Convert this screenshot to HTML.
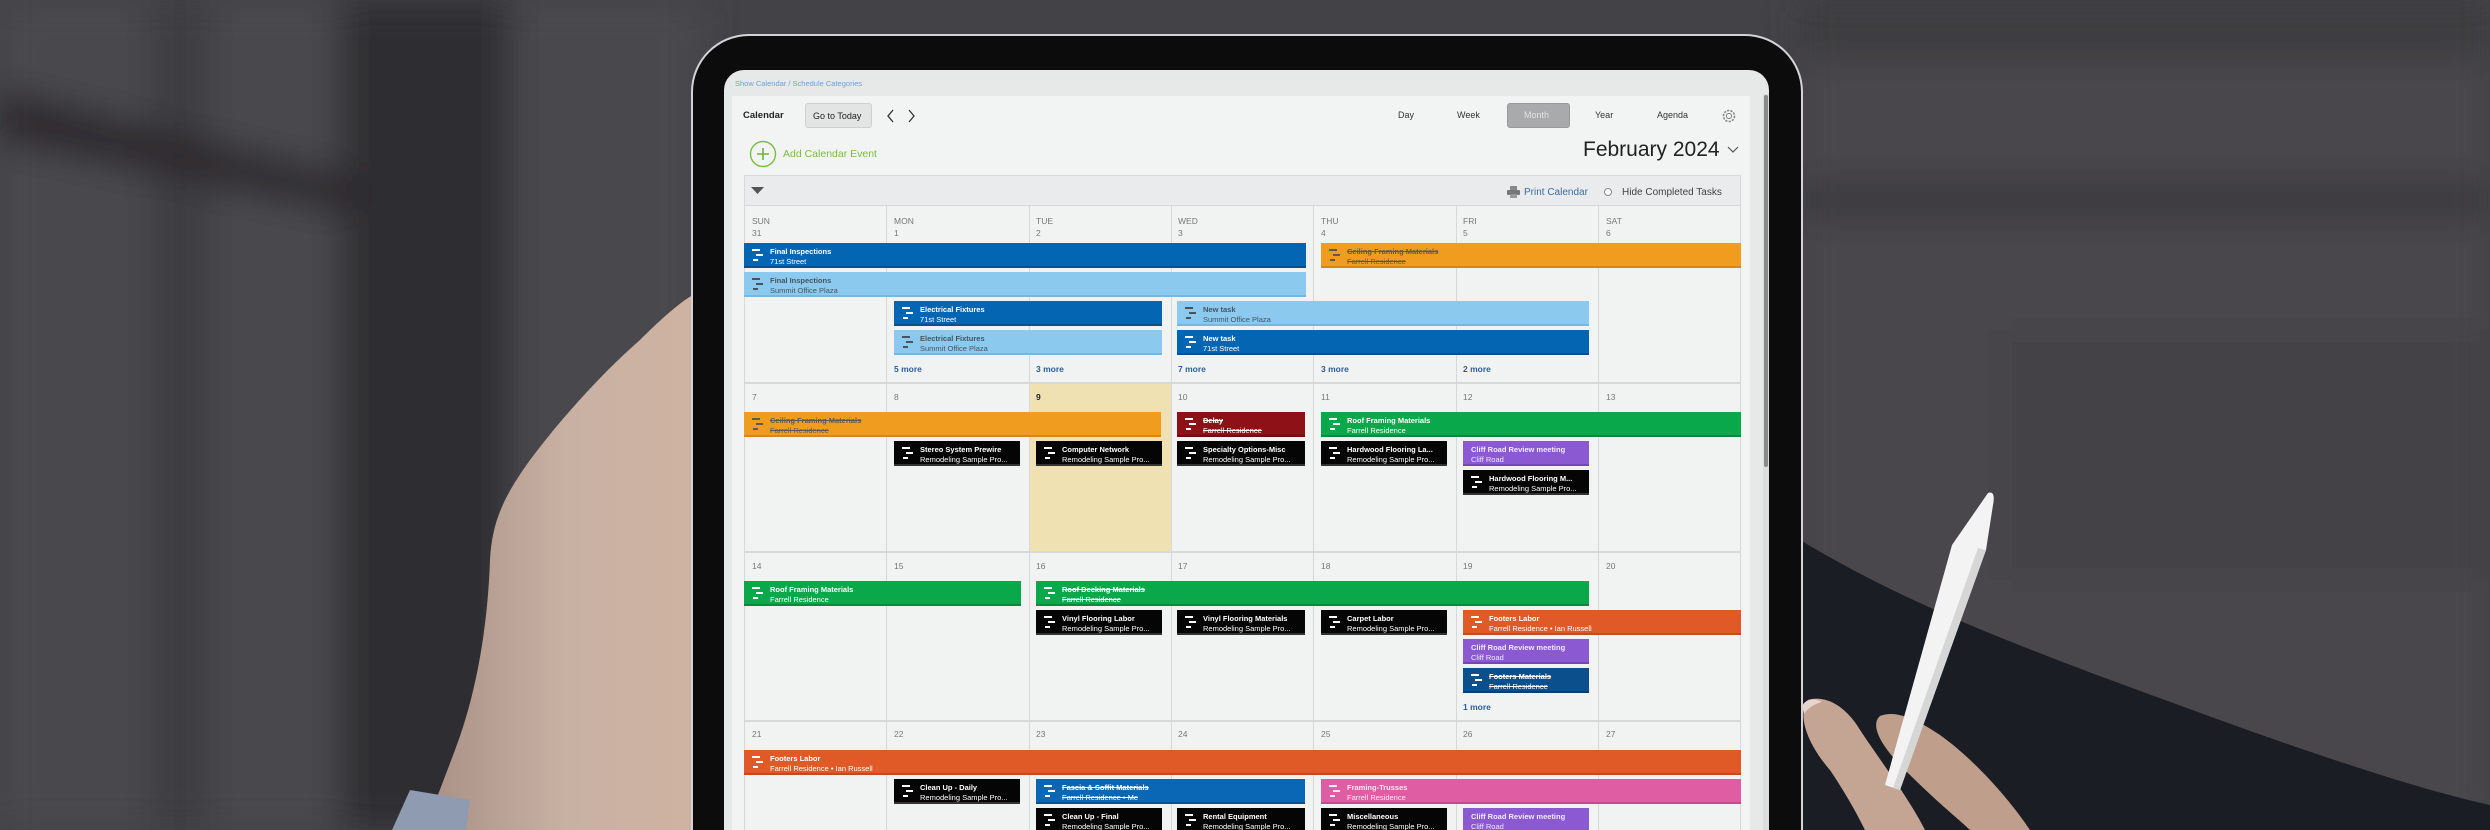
<!DOCTYPE html>
<html><head><meta charset="utf-8">
<style>
*{margin:0;padding:0;box-sizing:border-box}
html,body{width:2490px;height:830px;overflow:hidden;background:#414044;font-family:"Liberation Sans",sans-serif}
#root{position:relative;width:2490px;height:830px;overflow:hidden}
.abs{position:absolute}
.t{position:absolute;white-space:nowrap}
.e{position:absolute;height:25px;color:#fff;font-family:"Liberation Sans",sans-serif;overflow:hidden;white-space:nowrap}
.e b{position:absolute;left:26px;top:4px;font-size:7.5px;font-weight:bold}
.e span{position:absolute;left:26px;top:14px;font-size:7.5px}
.e i{position:absolute;left:8px;top:6px;width:11px;height:12px;
background:linear-gradient(currentColor,currentColor) 0 0/8px 2px no-repeat,linear-gradient(currentColor,currentColor) 4px 5px/7px 2px no-repeat,linear-gradient(currentColor,currentColor) 1px 10px/5px 2px no-repeat}
.s b,.s span{text-decoration:line-through}
.db{background:#0466b3;border-bottom:2px solid #0c4f8c}
.lb{background:#8cc9ef;color:#46545f;border-bottom:2px solid #79b6dd}
.or{background:#f09d1f;color:#5d5a55;border-bottom:2px solid #d8861a}
.gr{background:#08a84b;border-bottom:2px solid #078a3d}
.rd{background:#8e1117;border-bottom:2px solid #6e0c10}
.bk{background:#050505;border-bottom:2px solid #333}
.pu{background:#8b5ad2;color:#f0eaff;border-bottom:2px solid #7447b6}
.ore{background:#e05a28;border-bottom:2px solid #c24a1e}
.nv{background:#0b4f8c;border-bottom:2px solid #083e70}
.bl{background:#0a67b5;border-bottom:2px solid #0b4f8c}
.pk{background:#df5ea3;color:#fde8f3;border-bottom:2px solid #c44b8b}
.last{height:22px;border-bottom:0}
.dn{position:absolute;font-size:8.5px;color:#777}
.more{position:absolute;font-size:8.5px;font-weight:bold;color:#2a5f9b}
.vl{position:absolute;top:206px;width:1px;height:624px;background:#d6d8d9}
.hl{position:absolute;left:744px;width:997px;height:2px;background:#d6d8d9}
</style></head><body><div id="root">
<svg class="abs" style="left:0;top:0" width="2490" height="830">
<defs>
<filter id="bl" x="-20%" y="-20%" width="140%" height="140%"><feGaussianBlur stdDeviation="18"/></filter>
<linearGradient id="skin" x1="0" y1="0" x2="1" y2="0"><stop offset="0" stop-color="#a89084"/><stop offset="0.5" stop-color="#c8b1a3"/><stop offset="1" stop-color="#cfb2a2"/></linearGradient>
</defs>
<rect width="2490" height="830" fill="#434246"/>
<g filter="url(#bl)">
<rect x="0" y="0" width="700" height="830" fill="#4a494d"/>
<rect x="340" y="0" width="170" height="830" fill="#2e2d30"/>
<rect x="150" y="0" width="60" height="830" fill="#3d3c3f"/>
<polygon points="0,90 360,180 360,215 0,140" fill="#29282a"/>
<rect x="1800" y="0" width="690" height="830" fill="#48474c"/>
<rect x="1800" y="180" width="690" height="40" fill="#3b3a3e"/>
<rect x="1800" y="0" width="690" height="60" fill="#3d3c40"/>
<rect x="2000" y="330" width="490" height="250" fill="#444347"/>
</g>
<path d="M1800,540 C1900,600 2000,640 2176,704 C2300,750 2420,790 2490,805 L2490,830 L1800,830 Z" fill="#1b1d24"/>
<path d="M705,290 C690,292 660,320 640,340 C600,375 560,420 530,460 C505,495 492,520 490,560 C488,620 478,690 455,750 C440,790 430,815 425,830 L705,830 Z" fill="url(#skin)"/>
<path d="M392,830 L410,790 L470,800 L466,830 Z" fill="#8f9bb0"/>
<path d="M1808,700 C1800,712 1805,740 1830,770 C1850,800 1860,820 1865,830 L1925,830 C1910,800 1880,760 1860,730 C1845,705 1825,695 1808,700 Z" fill="#c4a593"/>
<path d="M1880,716 C1870,725 1880,745 1905,770 C1940,805 1960,820 1970,830 L2030,830 C2010,800 1975,760 1940,735 C1915,718 1895,710 1880,716 Z" fill="#bf9e8b"/>
<path d="M1988,493 C1993,491 1995,495 1993,505 L1986,550 L1900,790 L1885,785 L1952,545 Z" fill="#f3f3f3"/>
<path d="M1986,550 L1900,790 L1893,788 L1978,548 Z" fill="#d6d6d6"/>
</svg>

<div class="abs" style="left:691px;top:34px;width:1112px;height:796px;border-radius:58px 58px 0 0;background:#0c0c0d;border:2px solid #d4d2d6;border-bottom:0"></div>
<div class="abs" style="left:724px;top:70px;width:1045px;height:760px;border-radius:20px 20px 0 0;background:#e7e8e8;overflow:hidden">
  <div class="t" style="left:11px;top:9px;font-size:7.5px;color:#6e9ede">Show Calendar / Schedule Categories</div>
  <div class="abs" style="left:8px;top:26px;width:1018px;height:734px;background:#f2f3f3"></div>
  <div class="abs" style="left:1039px;top:24px;width:6px;height:736px;background:#dcdcdc"></div>
  <div class="abs" style="left:1040px;top:25px;width:4px;height:372px;background:#8a8a8a;border-radius:2px"></div>
</div>

<div class="t" style="left:743px;top:110px;font-size:9.5px;font-weight:bold;color:#222">Calendar</div>
<div class="abs" style="left:805px;top:103px;width:67px;height:25px;background:#e3e4e4;border:1px solid #cfd0d0;border-radius:3px"></div>
<div class="t" style="left:813px;top:111px;font-size:9px;color:#222">Go to Today</div>
<svg class="abs" style="left:885px;top:108px" width="34" height="16"><path d="M8,2 L3,8 L8,14" fill="none" stroke="#333" stroke-width="1.3"/><path d="M24,2 L29,8 L24,14" fill="none" stroke="#333" stroke-width="1.3"/></svg>
<div class="t" style="left:1398px;top:110px;font-size:9px;color:#333">Day</div>
<div class="t" style="left:1457px;top:110px;font-size:9px;color:#333">Week</div>
<div class="abs" style="left:1507px;top:103px;width:63px;height:25px;background:#a8aaab;border:1px solid #999;border-radius:3px"></div>
<div class="t" style="left:1524px;top:110px;font-size:9px;color:#e4e4e4">Month</div>
<div class="t" style="left:1595px;top:110px;font-size:9px;color:#333">Year</div>
<div class="t" style="left:1657px;top:110px;font-size:9px;color:#333">Agenda</div>
<svg class="abs" style="left:1721px;top:108px" width="16" height="16"><circle cx="8" cy="8" r="5.5" fill="none" stroke="#888" stroke-width="1.6" stroke-dasharray="2.2 1.2"/><circle cx="8" cy="8" r="2.6" fill="none" stroke="#888" stroke-width="1"/></svg>
<svg class="abs" style="left:749px;top:140px" width="28" height="28"><circle cx="14" cy="14" r="12.5" fill="none" stroke="#7dbb45" stroke-width="1.4"/><path d="M14,8 V20 M8,14 H20" stroke="#6fb23a" stroke-width="1.6"/></svg>
<div class="t" style="left:783px;top:148px;font-size:10.5px;color:#7dbb45">Add Calendar Event</div>
<div class="t" style="left:1583px;top:138px;font-size:21px;color:#222">February 2024</div>
<svg class="abs" style="left:1727px;top:146px" width="12" height="8"><path d="M1,1 L6,6 L11,1" fill="none" stroke="#555" stroke-width="1.2"/></svg>

<div class="abs" style="left:744px;top:175px;width:997px;height:31px;background:#e9ebec;border:1px solid #d6d8d9"></div>
<svg class="abs" style="left:751px;top:187px" width="14" height="9"><path d="M0,0 H13 L6.5,7 Z" fill="#555"/></svg>
<svg class="abs" style="left:1507px;top:186px" width="13" height="12"><rect x="3" y="0" width="7" height="4" fill="#888"/><rect x="0" y="4" width="13" height="5" rx="1" fill="#777"/><rect x="3" y="8" width="7" height="4" fill="#999"/></svg>
<div class="t" style="left:1524px;top:187px;font-size:10px;color:#3a6ea5">Print Calendar</div>
<div class="abs" style="left:1604px;top:188px;width:8px;height:8px;border:1px solid #888;border-radius:50%;background:#fff"></div>
<div class="t" style="left:1622px;top:187px;font-size:10px;color:#444">Hide Completed Tasks</div>

<div class="abs" style="left:744px;top:206px;width:997px;height:624px;background:#f1f2f2"></div>
<div class="abs" style="left:1029px;top:383px;width:142px;height:168px;background:#f0e1b2"></div>
<div class="vl" style="left:744px"></div><div class="vl" style="left:886px"></div><div class="vl" style="left:1029px"></div><div class="vl" style="left:1171px"></div><div class="vl" style="left:1313px"></div><div class="vl" style="left:1456px"></div><div class="vl" style="left:1598px"></div><div class="vl" style="left:1740px"></div>
<div class="hl" style="top:382px"></div><div class="hl" style="top:551px"></div><div class="hl" style="top:720px"></div>

<div class="dn" style="left:752px;top:216px">SUN</div><div class="dn" style="left:894px;top:216px">MON</div><div class="dn" style="left:1036px;top:216px">TUE</div><div class="dn" style="left:1178px;top:216px">WED</div><div class="dn" style="left:1321px;top:216px">THU</div><div class="dn" style="left:1463px;top:216px">FRI</div><div class="dn" style="left:1606px;top:216px">SAT</div>
<div class="dn" style="left:752px;top:228px">31</div><div class="dn" style="left:894px;top:228px">1</div><div class="dn" style="left:1036px;top:228px">2</div><div class="dn" style="left:1178px;top:228px">3</div><div class="dn" style="left:1321px;top:228px">4</div><div class="dn" style="left:1463px;top:228px">5</div><div class="dn" style="left:1606px;top:228px">6</div>
<div class="dn" style="left:752px;top:392px">7</div><div class="dn" style="left:894px;top:392px">8</div><div class="dn" style="left:1036px;top:392px;font-weight:bold;color:#222">9</div><div class="dn" style="left:1178px;top:392px">10</div><div class="dn" style="left:1321px;top:392px">11</div><div class="dn" style="left:1463px;top:392px">12</div><div class="dn" style="left:1606px;top:392px">13</div>
<div class="dn" style="left:752px;top:561px">14</div><div class="dn" style="left:894px;top:561px">15</div><div class="dn" style="left:1036px;top:561px">16</div><div class="dn" style="left:1178px;top:561px">17</div><div class="dn" style="left:1321px;top:561px">18</div><div class="dn" style="left:1463px;top:561px">19</div><div class="dn" style="left:1606px;top:561px">20</div>
<div class="dn" style="left:752px;top:729px">21</div><div class="dn" style="left:894px;top:729px">22</div><div class="dn" style="left:1036px;top:729px">23</div><div class="dn" style="left:1178px;top:729px">24</div><div class="dn" style="left:1321px;top:729px">25</div><div class="dn" style="left:1463px;top:729px">26</div><div class="dn" style="left:1606px;top:729px">27</div>

<div class="e db" style="left:744px;top:243px;width:562px"><i></i><b>Final Inspections</b><span>71st Street</span></div>
<div class="e or s" style="left:1321px;top:243px;width:420px"><i></i><b>Ceiling Framing Materials</b><span>Farrell Residence</span></div>
<div class="e lb" style="left:744px;top:272px;width:562px"><i></i><b>Final Inspections</b><span>Summit Office Plaza</span></div>
<div class="e db" style="left:894px;top:301px;width:268px"><i></i><b>Electrical Fixtures</b><span>71st Street</span></div>
<div class="e lb" style="left:1177px;top:301px;width:412px"><i></i><b>New task</b><span>Summit Office Plaza</span></div>
<div class="e lb" style="left:894px;top:330px;width:268px"><i></i><b>Electrical Fixtures</b><span>Summit Office Plaza</span></div>
<div class="e db" style="left:1177px;top:330px;width:412px"><i></i><b>New task</b><span>71st Street</span></div>
<div class="more" style="left:894px;top:364px">5 more</div><div class="more" style="left:1036px;top:364px">3 more</div><div class="more" style="left:1178px;top:364px">7 more</div><div class="more" style="left:1321px;top:364px">3 more</div><div class="more" style="left:1463px;top:364px">2 more</div>

<div class="e or s" style="left:744px;top:412px;width:417px"><i></i><b>Ceiling Framing Materials</b><span>Farrell Residence</span></div>
<div class="e rd s" style="left:1177px;top:412px;width:128px"><i></i><b>Delay</b><span>Farrell Residence</span></div>
<div class="e gr" style="left:1321px;top:412px;width:420px"><i></i><b>Roof Framing Materials</b><span>Farrell Residence</span></div>
<div class="e bk" style="left:894px;top:441px;width:126px"><i></i><b>Stereo System Prewire</b><span>Remodeling Sample Pro...</span></div>
<div class="e bk" style="left:1036px;top:441px;width:126px"><i></i><b>Computer Network</b><span>Remodeling Sample Pro...</span></div>
<div class="e bk" style="left:1177px;top:441px;width:128px"><i></i><b>Specialty Options-Misc</b><span>Remodeling Sample Pro...</span></div>
<div class="e bk" style="left:1321px;top:441px;width:126px"><i></i><b>Hardwood Flooring La...</b><span>Remodeling Sample Pro...</span></div>
<div class="e pu" style="left:1463px;top:441px;width:126px"><b style="left:8px">Cliff Road Review meeting</b><span style="left:8px">Cliff Road</span></div>
<div class="e bk" style="left:1463px;top:470px;width:126px"><i></i><b>Hardwood Flooring M...</b><span>Remodeling Sample Pro...</span></div>

<div class="e gr" style="left:744px;top:581px;width:277px"><i></i><b>Roof Framing Materials</b><span>Farrell Residence</span></div>
<div class="e gr s" style="left:1036px;top:581px;width:553px"><i></i><b>Roof Decking Materials</b><span>Farrell Residence</span></div>
<div class="e bk" style="left:1036px;top:610px;width:126px"><i></i><b>Vinyl Flooring Labor</b><span>Remodeling Sample Pro...</span></div>
<div class="e bk" style="left:1177px;top:610px;width:128px"><i></i><b>Vinyl Flooring Materials</b><span>Remodeling Sample Pro...</span></div>
<div class="e bk" style="left:1321px;top:610px;width:126px"><i></i><b>Carpet Labor</b><span>Remodeling Sample Pro...</span></div>
<div class="e ore" style="left:1463px;top:610px;width:278px"><i></i><b>Footers Labor</b><span>Farrell Residence • Ian Russell</span></div>
<div class="e pu" style="left:1463px;top:639px;width:126px"><b style="left:8px">Cliff Road Review meeting</b><span style="left:8px">Cliff Road</span></div>
<div class="e nv s" style="left:1463px;top:668px;width:126px"><i></i><b>Footers Materials</b><span>Farrell Residence</span></div>
<div class="more" style="left:1463px;top:702px">1 more</div>

<div class="e ore" style="left:744px;top:750px;width:997px"><i></i><b>Footers Labor</b><span>Farrell Residence • Ian Russell</span></div>
<div class="e bk" style="left:894px;top:779px;width:126px"><i></i><b>Clean Up - Daily</b><span>Remodeling Sample Pro...</span></div>
<div class="e bl s" style="left:1036px;top:779px;width:269px"><i></i><b>Fascia &amp; Soffit Materials</b><span>Farrell Residence • Me</span></div>
<div class="e pk" style="left:1321px;top:779px;width:420px"><i></i><b>Framing-Trusses</b><span>Farrell Residence</span></div>
<div class="e bk last" style="left:1036px;top:808px;width:126px"><i></i><b>Clean Up - Final</b><span>Remodeling Sample Pro...</span></div>
<div class="e bk last" style="left:1177px;top:808px;width:128px"><i></i><b>Rental Equipment</b><span>Remodeling Sample Pro...</span></div>
<div class="e bk last" style="left:1321px;top:808px;width:126px"><i></i><b>Miscellaneous</b><span>Remodeling Sample Pro...</span></div>
<div class="e pu last" style="left:1463px;top:808px;width:126px"><b style="left:8px">Cliff Road Review meeting</b><span style="left:8px">Cliff Road</span></div>

<svg class="abs" style="left:1780px;top:690px" width="120" height="140"><path d="M28,10 C18,22 24,50 50,80 C70,105 80,125 85,140 L120,140 C110,110 100,70 80,40 C65,15 45,5 28,10 Z" fill="#c4a593"/><path d="M22,16 C26,8 36,8 42,12 C34,14 28,18 24,24 Z" fill="#e6d5cc"/></svg>
</div></body></html>
